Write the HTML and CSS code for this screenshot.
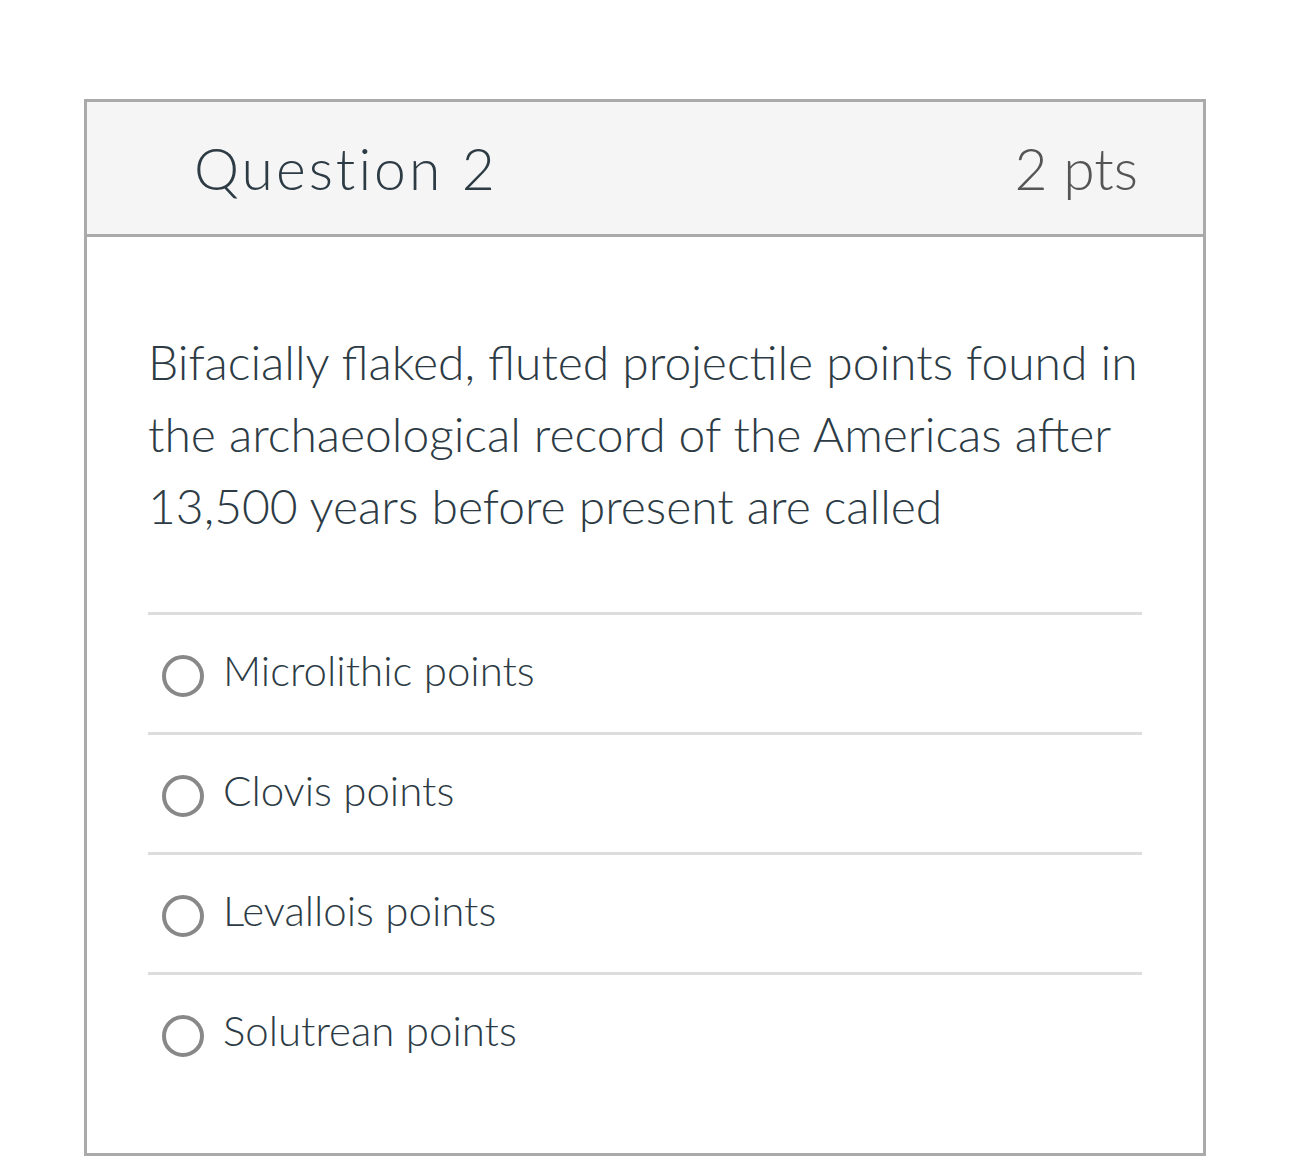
FILE: index.html
```html
<!DOCTYPE html>
<html>
<head>
<meta charset="utf-8">
<link rel="stylesheet" href="styles.css">
</head>
<body>
<div class="question">
  <div class="q-header">
    <span class="q-title">Question 2</span>
    <span class="q-pts">2 pts</span>
  </div>
  <div class="q-body">
    <p class="q-text">Bifacially flaked, fluted projectile points found in the archaeological record of the Americas after 13,500 years before present are called</p>
    <div class="answers">
      <label class="answer"><span class="radio"></span><span class="a-text">Microlithic points</span></label>
      <label class="answer"><span class="radio"></span><span class="a-text">Clovis points</span></label>
      <label class="answer"><span class="radio"></span><span class="a-text">Levallois points</span></label>
      <label class="answer"><span class="radio"></span><span class="a-text">Solutrean points</span></label>
    </div>
  </div>
</div>
</body>
</html>
```
FILE: styles.css
```css
html, body {
  margin: 0;
  padding: 0;
  background: #ffffff;
}
body {
  font-family: Lato, "Open Sans", sans-serif;
  color: #2d3b45;
}
.question {
  margin: 99px 0 0 84px;
  width: 1122px;
  border: 3px solid #aaaaaa;
  box-sizing: border-box;
}
.q-header {
  height: 135px;
  box-sizing: border-box;
  background: #f5f5f5;
  border-bottom: 3px solid #aaaaaa;
  display: flex;
  align-items: center;
  justify-content: space-between;
  padding: 0 65px 0 107px;
}
.q-title {
  font-size: 57px;
  font-weight: 300;
  letter-spacing: 3px;
  color: #2d3b45;
}
.q-pts {
  font-size: 57px;
  font-weight: 300;
  color: #555555;
}
.q-body {
  padding: 89px 61px 61px 61px;
}
.q-text {
  margin: 0 0 70px 0;
  font-size: 48px;
  line-height: 72px;
  font-weight: 300;
}
.answer {
  display: flex;
  align-items: center;
  height: 120px;
  box-sizing: border-box;
  border-top: 3px solid #dddddd;
  padding-left: 14px;
}
.radio {
  width: 42px;
  height: 42px;
  box-sizing: border-box;
  border: 4px solid #888888;
  border-radius: 50%;
  margin-right: 19px;
  margin-top: 4px;
  flex: none;
}
.a-text {
  font-size: 42px;
  font-weight: 300;
  margin-top: -8px;
}
```
